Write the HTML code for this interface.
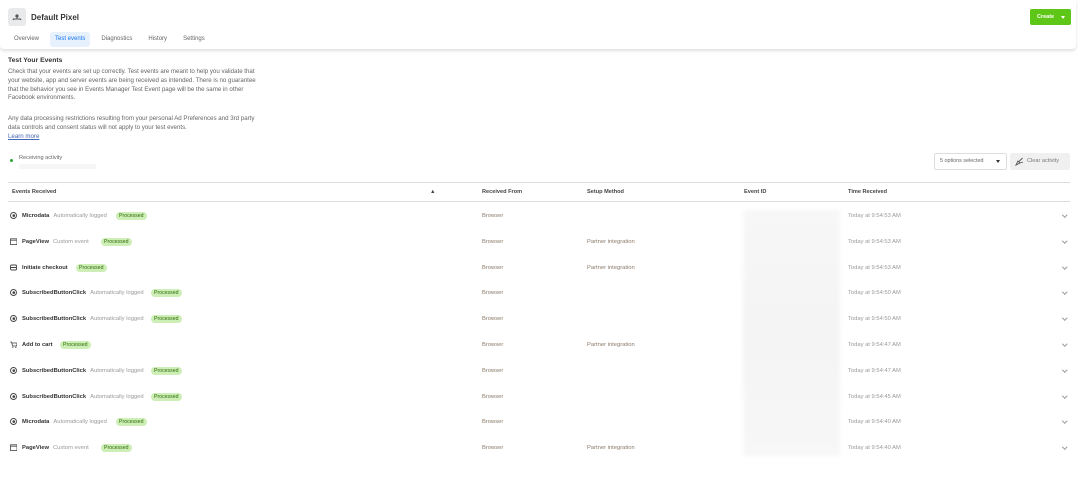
<!DOCTYPE html>
<html><head><meta charset="utf-8"><style>
*{box-sizing:border-box;margin:0;padding:0}
body{width:1080px;height:478px;overflow:hidden;background:#fff;font-family:"Liberation Sans",Arial,sans-serif;color:#1c1e21;position:relative}
.top{position:absolute;left:0;top:0;width:1076px;height:49px;background:#fff;border-radius:0 0 4px 4px;box-shadow:0 2px 3px rgba(0,0,0,.12)}
.logo{position:absolute;left:8px;top:8px;width:18px;height:18px;background:#e9eaeb;border-radius:3px}
.title{position:absolute;left:31px;top:13px;font-size:8px;font-weight:bold;color:#333}
.tabs{position:absolute;top:32px;left:9px;display:flex;font-size:6px;color:#666}
.tabs span{padding:3px 5px;margin-right:6px;border-radius:3px;line-height:9px}
.tabs .a{background:#e7f0fd;color:#1877f2}
.create{position:absolute;left:1030px;top:9px;width:41px;height:16px;background:#5ec617;border-radius:2px;color:#fff;font-size:5.5px;font-weight:bold;line-height:16px;padding-left:7px}
.create:after{content:"";position:absolute;right:6px;top:7px;border:2.5px solid transparent;border-top:3px solid #fff}
h2{position:absolute;left:8px;top:57px;font-size:6.8px;font-weight:bold;color:#333}
.p{position:absolute;left:8px;font-size:6.15px;line-height:8.8px;color:#666;width:320px}
.lm{color:#4267b2;text-decoration:underline}
.dot{position:absolute;left:10px;top:159px;width:3px;height:3px;background:#2aa831;border-radius:50%}
.ra{position:absolute;left:19px;top:155px;font-size:5.6px;color:#666}
.bar{position:absolute;left:19px;top:164px;width:77px;height:5px;background:#f6f6f6}
.sel{position:absolute;left:934px;top:153px;width:73px;height:17px;border:1px solid #ddd;border-radius:2px;font-size:5.4px;color:#666;line-height:15px;padding-left:5px}
.sel:after{content:"";position:absolute;right:6px;top:6px;border:2.5px solid transparent;border-top:3px solid #333}
.clr{position:absolute;left:1010px;top:153px;width:60px;height:17px;background:#f0f0f0;border-radius:2px;font-size:5.6px;color:#777;line-height:17px;padding-left:17px}
.hl{position:absolute;left:8px;width:1062px;height:1px;background:#ddd}
.th{position:absolute;top:189px;font-size:5.6px;font-weight:bold;color:#444}
.row{position:absolute;left:0;width:1080px;height:26px;font-size:5.8px}
.row span{position:absolute;top:10px;white-space:nowrap}
.ic{position:absolute;left:10px;top:9px;width:7px;height:7px}
.nm{position:absolute;left:22px;top:10px;white-space:nowrap}
.n{font-weight:bold;color:#333}
.s{color:#999;margin-left:4px}
.b{background:#cdeeb4;color:#2e6a0c;border-radius:4px;padding:1px 3px;top:9px!important;font-size:5.2px}
.g{color:#8a7a6a}
.t{left:848px;color:#999}
.chev{position:absolute;left:1063px;top:10px;width:3.5px;height:3.5px;border-right:1px solid #999;border-bottom:1px solid #999;transform:rotate(45deg)}
.blur{position:absolute;left:743px;top:210px;width:97px;height:246px;background:linear-gradient(#f7f7f7,#f4f4f4 50%,#f7f7f7);filter:blur(2px)}
</style></head><body>
<div class="top">
<div class="logo"><svg width="18" height="18" viewBox="0 0 18 18"><circle cx="9" cy="8" r="1.6" fill="#555"/><path d="M5.5 11h7M9 9.5v2" stroke="#555" stroke-width="1"/><circle cx="5.5" cy="11.3" r=".8" fill="#555"/><circle cx="12.5" cy="11.3" r=".8" fill="#555"/></svg></div>
<div class="title">Default Pixel</div>
<div class="tabs"><span>Overview</span><span class="a">Test events</span><span>Diagnostics</span><span>History</span><span>Settings</span></div>
<div class="create">Create</div>
</div>
<h2>Test Your Events</h2>
<div class="p" style="top:68px">Check that your events are set up correctly. Test events are meant to help you validate that<br>your website, app and server events are being received as intended. There is no guarantee<br>that the behavior you see in Events Manager Test Event page will be the same in other<br>Facebook environments.</div>
<div class="p" style="top:115px">Any data processing restrictions resulting from your personal Ad Preferences and 3rd party<br>data controls and consent status will not apply to your test events.<br><span class="lm">Learn more</span></div>
<div class="dot"></div><div class="ra">Receiving activity</div><div class="bar"></div>
<div class="sel">5 options selected</div>
<div class="clr"><svg style="position:absolute;left:5px;top:4px" width="9" height="9" viewBox="0 0 9 9"><path d="M1 8l2-4 2 2-4 2zM4 4.5L7.5 1M5 6l3-1" stroke="#555" stroke-width=".9" fill="none"/></svg>Clear activity</div>
<div class="hl" style="top:182px"></div>
<div class="th" style="left:12px">Events Received</div>
<div class="th" style="left:430px">&#9650;</div>
<div class="th" style="left:482px">Received From</div>
<div class="th" style="left:587px">Setup Method</div>
<div class="th" style="left:744px">Event ID</div>
<div class="th" style="left:848px">Time Received</div>
<div class="hl" style="top:201px"></div>
<div class="blur"></div>
<div id="rows"></div>
<script>
var d=[["eye","Microdata","Automatically logged",116,"","9:54:53"],["pg","PageView","Custom event",101,"Partner integration","9:54:53"],["co","Initiate checkout","",76,"Partner integration","9:54:53"],["eye","SubscribedButtonClick","Automatically logged",151,"","9:54:50"],["eye","SubscribedButtonClick","Automatically logged",151,"","9:54:50"],["cart","Add to cart","",60,"Partner integration","9:54:47"],["eye","SubscribedButtonClick","Automatically logged",151,"","9:54:47"],["eye","SubscribedButtonClick","Automatically logged",151,"","9:54:45"],["eye","Microdata","Automatically logged",116,"","9:54:40"],["pg","PageView","Custom event",101,"Partner integration","9:54:40"]];
var ic={eye:'<circle cx="3.5" cy="3.5" r="3" fill="none" stroke="#444" stroke-width=".9"/><circle cx="3.8" cy="3.6" r="1.3" fill="#444"/>',pg:'<rect x=".5" y=".8" width="6.5" height="5.8" fill="none" stroke="#444" stroke-width=".8"/><path d="M.5 2.2h6.5" stroke="#444" stroke-width=".8"/>',co:'<rect x=".5" y="1" width="6" height="5" rx="1" fill="none" stroke="#444" stroke-width=".9"/><path d="M.5 3.5h6" stroke="#444"/>',cart:'<path d="M.3 1h1.3l1 4h4l.6-3H2" fill="none" stroke="#444" stroke-width=".8"/><circle cx="2.8" cy="6.3" r=".6" fill="#444"/><circle cx="5.8" cy="6.3" r=".6" fill="#444"/>'};
var h="";d.forEach(function(r,i){var y=203+i*25.8;
h+='<div class="row" style="top:'+y+'px"><svg class="ic" viewBox="0 0 7 7">'+ic[r[0]]+'</svg><div class="nm"><b class="n">'+r[1]+'</b>'+(r[2]?'<i class="s" style="font-style:normal">'+r[2]+'</i>':'')+'</div><span class="b" style="left:'+r[3]+'px">Processed</span><span class="g" style="left:482px">Browser</span><span class="g" style="left:587px">'+r[4]+'</span><span class="t">Today at '+r[5]+' AM</span><div class="chev"></div></div>'});
document.getElementById("rows").innerHTML=h;
</script>
</body></html>
